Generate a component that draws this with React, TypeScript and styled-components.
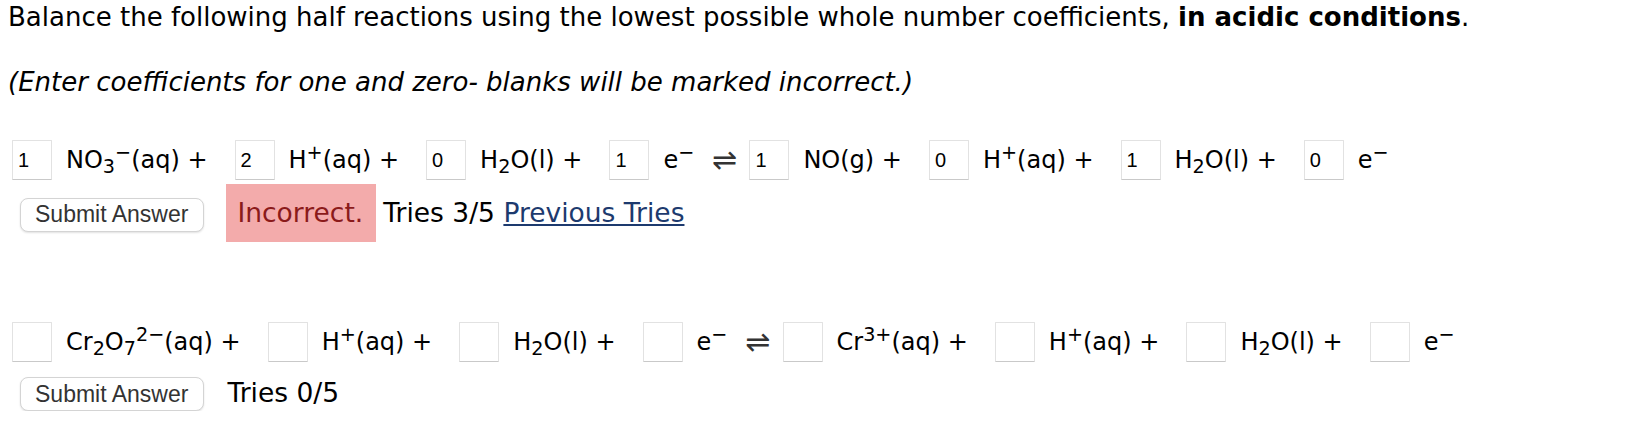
import React from "react";
import styled, { createGlobalStyle } from "styled-components";

const GlobalStyle = createGlobalStyle`
  body {
    margin: 0;
    background: #ffffff;
  }
`;

type Part = { coef: string; term: React.ReactNode; plus?: boolean; arrow?: boolean };

const first: Part[] = [
  { coef: "1", term: <>NO<sub>3</sub><sup>−</sup>(aq)</>, plus: true },
  { coef: "2", term: <>H<sup>+</sup>(aq)</>, plus: true },
  { coef: "0", term: <>H<sub>2</sub>O(l)</>, plus: true },
  { coef: "1", term: <>e<sup>−</sup></>, arrow: true },
  { coef: "1", term: <>NO(g)</>, plus: true },
  { coef: "0", term: <>H<sup>+</sup>(aq)</>, plus: true },
  { coef: "1", term: <>H<sub>2</sub>O(l)</>, plus: true },
  { coef: "0", term: <>e<sup>−</sup></> },
];

const second: Part[] = [
  { coef: "", term: <>Cr<sub>2</sub>O<sub>7</sub><sup>2−</sup>(aq)</>, plus: true },
  { coef: "", term: <>H<sup>+</sup>(aq)</>, plus: true },
  { coef: "", term: <>H<sub>2</sub>O(l)</>, plus: true },
  { coef: "", term: <>e<sup>−</sup></>, arrow: true },
  { coef: "", term: <>Cr<sup>3+</sup>(aq)</>, plus: true },
  { coef: "", term: <>H<sup>+</sup>(aq)</>, plus: true },
  { coef: "", term: <>H<sub>2</sub>O(l)</>, plus: true },
  { coef: "", term: <>e<sup>−</sup></> },
];

const Equation = ({ parts }: { parts: Part[] }) => (
  <EqRow>
    {parts.map((p, i) => (
      <React.Fragment key={i}>
        <Coef defaultValue={p.coef} />
        <Term $plus={!!p.plus}>
          {p.term}
          {p.plus ? " +" : ""}
        </Term>
        {p.arrow && <Arrow>⇌</Arrow>}
      </React.Fragment>
    ))}
  </EqRow>
);

const App = () => {
  return (
    <Page>
      <GlobalStyle />
      <Intro>
        Balance the following half reactions using the lowest possible whole number
        coefficients, <b>in acidic conditions</b>.
      </Intro>
      <Note>(Enter coefficients for one and zero- blanks will be marked incorrect.)</Note>

      <Problem $gap={43}>
        <Equation parts={first} />
        <SubmitRow $top={4}>
          <SubmitButton>Submit Answer</SubmitButton>
          <Incorrect>Incorrect.</Incorrect>
          <Tries>
            Tries 3/5 <PrevLink href="#">Previous Tries</PrevLink>
          </Tries>
        </SubmitRow>
      </Problem>

      <Problem $gap={80}>
        <Equation parts={second} />
        <SubmitRow $top={15}>
          <SubmitButton>Submit Answer</SubmitButton>
          <Tries $first>Tries 0/5</Tries>
        </SubmitRow>
      </Problem>
    </Page>
  );
};

export default App;

const Page = styled.div`
  padding: 0 8px;
  font-family: "DejaVu Sans", Verdana, sans-serif;
  font-size: 26px;
  line-height: 30px;
  color: #000000;
`;

const Intro = styled.p`
  margin: 0;
  padding-top: 2px;
`;

const Note = styled.p`
  margin: 35px 0 0;
  font-style: italic;
`;

const Problem = styled.div<{ $gap: number }>`
  margin-top: ${(p) => p.$gap}px;
`;

const EqRow = styled.div`
  display: flex;
  align-items: center;
  padding-left: 4px;
  font-size: 24px;
  white-space: nowrap;

  sub {
    font-size: 0.8em;
    line-height: 0;
    vertical-align: -0.28em;
  }

  sup {
    font-size: 0.8em;
    line-height: 0;
    vertical-align: 0.45em;
  }
`;

const Coef = styled.input`
  box-sizing: border-box;
  width: 40px;
  height: 40px;
  margin: 0 14px 0 0;
  padding: 0 5px;
  border: 1px solid #e2e2e2;
  border-bottom-color: #c9c9c9;
  border-radius: 1px;
  background: #ffffff;
  font-family: "Liberation Sans", Arial, sans-serif;
  font-size: 20px;
  color: #000000;
  outline: none;
`;

const Term = styled.span<{ $plus: boolean }>`
  white-space: pre;
  margin-right: ${(p) => (p.$plus ? 27 : 0)}px;
`;

const Arrow = styled.span`
  margin: 0 12px 0 18px;
  font-size: 30px;
  line-height: 30px;
  color: #333333;
`;

const SubmitRow = styled.div<{ $top: number }>`
  display: flex;
  align-items: baseline;
  margin-top: ${(p) => p.$top}px;
  padding-left: 12px;
  font-size: 26.5px;
`;

const SubmitButton = styled.button`
  box-sizing: border-box;
  height: 34px;
  padding: 0 15px 0 14px;
  border: 1px solid #d4d4d4;
  border-radius: 8px;
  background: #ffffff;
  box-shadow: 0 1px 2px rgba(0, 0, 0, 0.12);
  font-family: "Liberation Sans", Arial, sans-serif;
  font-size: 23px;
  color: #333333;
`;

const Incorrect = styled.span`
  margin-left: 22px;
  padding: 14px 13px 14px 11px;
  background: #f3abab;
  color: #8b1a1a;
`;

const Tries = styled.span<{ $first?: boolean }>`
  margin-left: ${(p) => (p.$first ? 23 : 7)}px;
`;

const PrevLink = styled.a`
  color: #1d3a6e;
  text-decoration: underline;
`;
